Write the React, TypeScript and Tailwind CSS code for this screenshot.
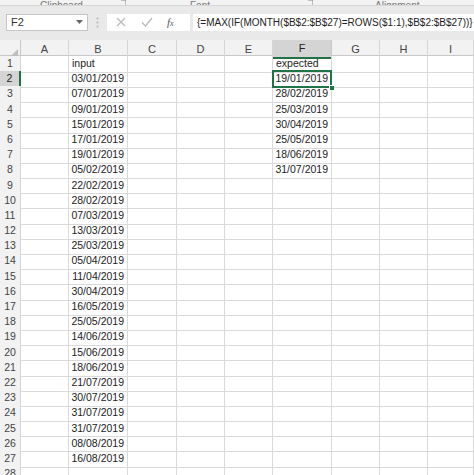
import React from "react";

const COLS = ["A", "B", "C", "D", "E", "F", "G", "H", "I"];

const inputDates = [
  "03/01/2019", "07/01/2019", "09/01/2019", "15/01/2019", "17/01/2019",
  "19/01/2019", "05/02/2019", "22/02/2019", "28/02/2019", "07/03/2019",
  "13/03/2019", "25/03/2019", "05/04/2019", "11/04/2019", "30/04/2019",
  "16/05/2019", "25/05/2019", "14/06/2019", "15/06/2019", "18/06/2019",
  "21/07/2019", "30/07/2019", "31/07/2019", "31/07/2019", "08/08/2019",
  "16/08/2019",
];

const expected = [
  "19/01/2019", "28/02/2019", "25/03/2019", "30/04/2019",
  "25/05/2019", "18/06/2019", "31/07/2019",
];

const gridCols = "grid grid-cols-[21px_48px_59px_49px_48px_48px_59px_48px_48px_1fr]";

function cellText(row: number, col: string): { text: string; right: boolean } {
  if (col === "B") {
    if (row === 1) return { text: "input", right: false };
    if (row <= 27) return { text: inputDates[row - 2], right: true };
  }
  if (col === "F") {
    if (row === 1) return { text: "expected", right: false };
    if (row <= 8) return { text: expected[row - 2], right: true };
  }
  return { text: "", right: false };
}

function Launcher() {
  return (
    <svg width="5" height="5" viewBox="0 0 5 5" className="ml-[38px]">
      <path d="M0 0h5v5" fill="none" stroke="#888" strokeWidth="1" />
    </svg>
  );
}

export default function App() {
  const rows = Array.from({ length: 28 }, (_, i) => i + 1);

  return (
    <div className="w-[474px] h-[475px] overflow-hidden bg-white font-['Liberation_Sans',Arial,sans-serif] select-none">
      {/* ribbon group labels, cut off at top */}
      <div className="h-[6px] overflow-hidden bg-[#f3f3f3] border-b border-[#d6d6d6] flex items-end text-[10px] leading-[10px] text-[#777]">
        <div className="flex items-end pl-[40px] w-[190px]">
          <span className="translate-y-[6px]">Clipboard</span>
          <Launcher />
        </div>
        <div className="flex items-end w-[185px]">
          <span className="translate-y-[6px]">Font</span>
          <div className="ml-[60px]"><Launcher /></div>
        </div>
        <div className="flex items-end">
          <span className="translate-y-[6px]">Alignment</span>
        </div>
      </div>

      {/* formula bar */}
      <div className="h-[34px] bg-[#e9e9e9] flex items-center pl-[6px] pb-[2px]">
        <div className="w-[82px] h-[17px] bg-white border border-[#c6c6c6] flex items-center justify-between px-[4px] text-[11px] text-[#333]">
          <span>F2</span>
          <svg width="7" height="4" viewBox="0 0 7 4">
            <path d="M0 0h7L3.5 4z" fill="#666" />
          </svg>
        </div>
        <div className="w-[19px] flex justify-center">
          <svg width="3" height="11" viewBox="0 0 3 11">
            <circle cx="1.5" cy="1.5" r="1" fill="#b5b5b5" />
            <circle cx="1.5" cy="5.5" r="1" fill="#b5b5b5" />
            <circle cx="1.5" cy="9.5" r="1" fill="#b5b5b5" />
          </svg>
        </div>
        <div className="w-[83px] h-[17px] bg-white flex items-center">
          <svg width="10" height="10" viewBox="0 0 10 10" className="ml-[9px]">
            <path d="M1 1l8 8M9 1l-8 8" stroke="#b8b8b8" strokeWidth="1.2" />
          </svg>
          <svg width="12" height="10" viewBox="0 0 12 10" className="ml-[15px]">
            <path d="M1 5.5l3.5 3.5L11 1" fill="none" stroke="#b8b8b8" strokeWidth="1.2" />
          </svg>
          <span className="ml-[14px] text-[11px] italic font-['Liberation_Serif',serif] text-[#555]">
            f<span className="text-[8px]">x</span>
          </span>
        </div>
        <div className="ml-[3px] flex-1 h-[17px] bg-white flex items-center pl-[4px] text-[10px] text-[#222] whitespace-nowrap overflow-hidden">
          {"{=MAX(IF(MONTH($B$2:$B$27)=ROWS($1:1),$B$2:$B$27))}"}
        </div>
      </div>

      {/* column headers */}
      <div className={`${gridCols} h-[16px] bg-[#f2f2f2] text-[11px] text-[#444] border-b border-[#c8c8c8]`}>
        <div className="border-r border-[#c8c8c8] flex items-end justify-end p-[2px]">
          <svg width="8" height="8" viewBox="0 0 8 8">
            <path d="M8 0v8H0z" fill="#bdbdbd" />
          </svg>
        </div>
        {COLS.map((c) => (
          <div
            key={c}
            className={
              c === "F"
                ? "bg-[#d4d4d4] border-r border-[#c8c8c8] border-b-2 border-b-[#217346] flex items-center justify-center text-[#222]"
                : "border-r border-[#d6d6d6] flex items-center justify-center"
            }
          >
            {c}
          </div>
        ))}
      </div>

      {/* rows */}
      {rows.map((r) => (
        <div key={r} className={`${gridCols} h-[15.2px] text-[10.5px] text-[#222]`}>
          <div
            className={
              r === 2
                ? "bg-[#d4d4d4] border-r-2 border-r-[#217346] border-b border-[#c8c8c8] flex items-center justify-center text-[#222]"
                : "bg-[#f2f2f2] border-r border-[#c8c8c8] border-b border-[#d6d6d6] flex items-center justify-center text-[#444]"
            }
          >
            {r}
          </div>
          {COLS.map((c) => {
            const { text, right } = cellText(r, c);
            const selected = r === 2 && c === "F";
            return (
              <div
                key={c}
                className={`relative border-r border-b border-[#dadada] flex items-center px-[3px] whitespace-nowrap ${
                  right ? "justify-end" : "justify-start"
                } ${selected ? "z-10" : ""}`}
              >
                {text}
                {selected && (
                  <>
                    <div className="absolute -left-px -top-px -right-px -bottom-px border-2 border-[#217346] pointer-events-none" />
                    <div className="absolute -right-[3px] -bottom-[3px] w-[5px] h-[5px] bg-[#217346] border-l border-t border-white" />
                  </>
                )}
              </div>
            );
          })}
        </div>
      ))}
    </div>
  );
}
